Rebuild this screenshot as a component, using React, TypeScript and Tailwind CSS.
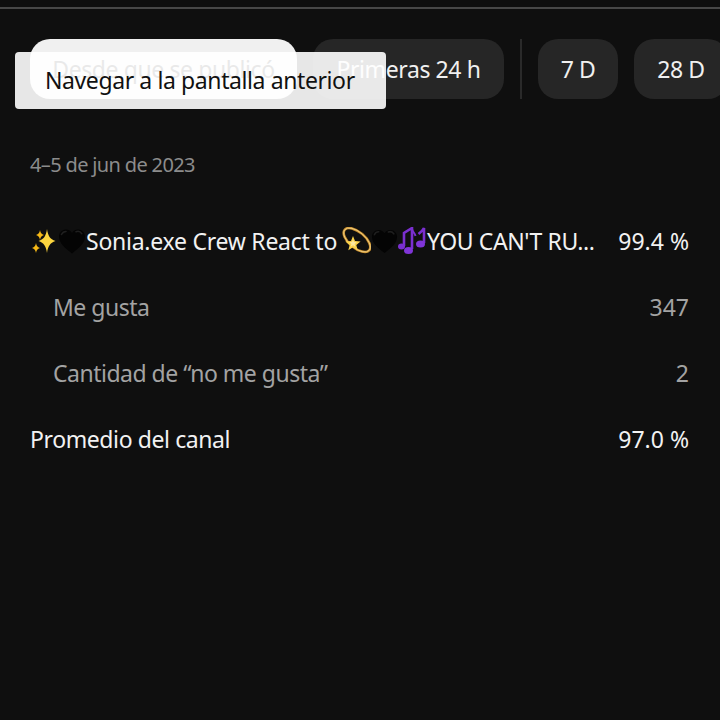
const Sparkles = () => (
  <svg width="28" height="28" viewBox="0 0 28 28" className="shrink-0">
    <path d="M17 2c1 7 3 10 8.500 12C20 16 18 19 17 26c-1-7-3-10-8.500-12C14 12 16 9 17 2z" fill="#fcd53f" />
    <path d="M10 3c.6 3 1.400 4 4 5-2.600 1-3.400 2-4 5-.6-3-1.400-4-4-5 2.600-1 3.400-2 4-5z" fill="#f7b916" />
    <path d="M6 16c.6 3 1.400 4 4 5-2.600 1-3.400 2-4 5-.6-3-1.400-4-4-5 2.600-1 3.400-2 4-5z" fill="#f7b916" />
  </svg>
);

const BlackHeart = ({ width = 28 }: { width?: number }) => (
  <svg width={width} height="28" viewBox="0 0 28 28" className="shrink-0">
    <path d="M14 26.500C6.500 20.500 1 16 1 9.500 1 5.400 4.200 2.500 8 2.500c2.600 0 4.800 1.300 6 3.500 1.200-2.200 3.400-3.500 6-3.500 3.800 0 7 2.900 7 7 0 6.500-5.500 11-13 17z" fill="#040404" />
    <path d="M3.500 7.500C4.500 5.500 6.200 4.500 8 4.500M18 4.700c2-.8 4.500 0 5.700 2" stroke="#1f1f1f" strokeWidth="1.600" fill="none" strokeLinecap="round" />
  </svg>
);

const Dizzy = () => (
  <svg width="29" height="28" viewBox="0 0 29 28" className="shrink-0">
    <ellipse cx="15" cy="13" rx="16" ry="8" transform="rotate(40 15 13)" stroke="#c98f2e" strokeWidth="2.600" fill="none" />
    <ellipse cx="15" cy="13" rx="16" ry="8" transform="rotate(40 15 13)" stroke="#f6d78c" strokeWidth="0.800" fill="none" />
    <path d="M11 9l2 5 5.600.4-4.300 3.500 1.400 5.400-4.700-3-4.700 3 1.400-5.400-4.300-3.500 5.600-.4z" fill="#fbd34a" />
    <path d="M11 12.500l1 2.500 2.800.2-2.200 1.800.7 2.700-2.300-1.500-2.300 1.500.7-2.700-2.200-1.800 2.800-.2z" fill="#fdeaa0" />
  </svg>
);

const Notes = () => (
  <svg width="29" height="28" viewBox="0 0 29 28" className="shrink-0">
    <path d="M6 19V6l8-5v21" stroke="#7a2fd0" strokeWidth="2.600" fill="none" />
    <path d="M14 2c.5 3 3 4 3.500 7" stroke="#7a2fd0" strokeWidth="2" fill="none" />
    <path d="M26 16V1c-1.500 3-3.500 4.500-5.500 6" stroke="#7a2fd0" strokeWidth="2.600" fill="none" />
    <ellipse cx="3.500" cy="19.500" rx="3.500" ry="3" fill="#7a2fd0" />
    <ellipse cx="10.500" cy="23.500" rx="4.500" ry="3.500" fill="#8035d8" />
    <ellipse cx="22.500" cy="17" rx="4.500" ry="3.500" fill="#8035d8" />
  </svg>
);

function Pill({ label, active, className }: { label: string; active?: boolean; className: string }) {
  return (
    <div
      className={`h-[60px] shrink-0 flex items-center justify-center rounded-[20px] text-[23px] tracking-[-0.4px] ${
        active ? "bg-[#f0f0f0] text-[#222]" : "bg-[#262626] text-[#f0f0f0]"
      } ${className}`}
    >
      {label}
    </div>
  );
}

function Row({ label, value, sub }: { label: string; value: string; sub?: boolean }) {
  return (
    <div
      className={`h-[66px] flex items-center justify-between pr-px ${
        sub ? "pl-[23px] text-[#a3a3a3]" : "text-[#f2f2f2]"
      }`}
    >
      <span className={sub ? "tracking-[-0.5px]" : "tracking-[-0.4px]"}>{label}</span>
      <span>{value}</span>
    </div>
  );
}

export default function App() {
  return (
    <div
      className="relative w-[720px] h-[720px] overflow-hidden bg-[#0f0f0f]"
      style={{ fontFamily: '"Noto Sans", sans-serif' }}
    >
      <div className="pt-[7px]">
        <div className="h-[2px] bg-[#484848]" />
      </div>

      <div className="flex items-center pt-[30px] pl-[30px]">
        <Pill label="Desde que se publicó" active className="w-[267px]" />
        <Pill label="Primeras 24 h" className="w-[191px] ml-4" />
        <div className="w-[2px] h-[60px] bg-[#2a2a2a] shrink-0 mx-4" />
        <Pill label="7 D" className="w-[80px]" />
        <Pill label="28 D" className="w-[94px] ml-4" />
      </div>

      <p className="mt-[54px] pl-[30px] text-[20px] leading-6 tracking-[-0.65px] text-[#8c8c8c]">
        4–5 de jun de 2023
      </p>

      <div className="mt-[31px] px-[30px] text-[23px]">
        <div className="h-[66px] flex items-center justify-between pr-px text-[#f2f2f2]">
          <div className="flex items-center">
            <Sparkles />
            <BlackHeart />
            <span className="tracking-[-0.25px]">Sonia.exe Crew React to</span>
            <span className="ml-[5px] flex items-center">
              <Dizzy />
              <BlackHeart width={27} />
              <Notes />
            </span>
            <span className="tracking-[-0.4px]">YOU CAN'T RU...</span>
          </div>
          <span>99.4 %</span>
        </div>
        <Row label="Me gusta" value="347" sub />
        <Row label="Cantidad de “no me gusta”" value="2" sub />
        <Row label="Promedio del canal" value="97.0 %" />
      </div>

      <div className="absolute left-[15px] top-[52px] w-[371px] h-[57px] flex items-center pl-[30px] rounded-[4px] bg-white/90 text-[23px] tracking-[-0.4px] text-[#111]">
        Navegar a la pantalla anterior
      </div>
    </div>
  );
}
